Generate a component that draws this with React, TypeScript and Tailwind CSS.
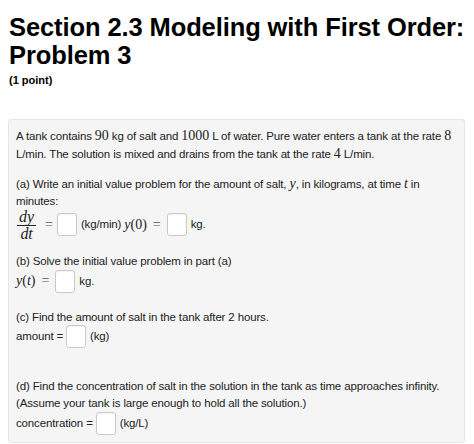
import React from 'react';

const sans = { fontFamily: '"Liberation Sans", Arial, sans-serif' };
const serif = { fontFamily: '"Liberation Serif", "Times New Roman", serif' };

function M({ children, italic }: { children: React.ReactNode; italic?: boolean }) {
  return (
    <span className={`text-[14px] tracking-normal ${italic ? 'italic' : ''}`} style={serif}>
      {children}
    </span>
  );
}

function Box() {
  return (
    <span className="inline-block w-[20px] h-[23px] bg-white border border-[#c8c8c8] rounded-[3px] align-middle shadow-[inset_0_1px_1px_rgba(0,0,0,0.05)]" />
  );
}

export default function App() {
  return (
    <div className="w-[474px] h-[444px] bg-white text-black overflow-hidden" style={sans}>
      <div className="pl-[9px] pt-[13px]">
        <h1 className="text-[25.5px] font-bold leading-[28px] tracking-[-0.1px]">
          Section 2.3 Modeling with First Order: Problem 3
        </h1>
        <div className="text-[11px] font-bold mt-[4px] leading-[14px]">(1 point)</div>
      </div>

      <div className="mx-[8px] mt-[32px] w-[457px] bg-[#f5f5f5] border border-[#e6e6e6] rounded-[3px] px-[7px] pt-[7px] pb-[7px] text-[11.5px] tracking-[-0.15px] leading-[17px] text-[#222]">
        <p>
          A tank contains <M>90</M> kg of salt and <M>1000</M> L of water. Pure water enters a tank at the rate <M>8</M>{' '}
          L/min. The solution is mixed and drains from the tank at the rate <M>4</M> L/min.
        </p>

        <p className="mt-[12px]">
          (a) Write an initial value problem for the amount of salt, <M italic>y</M>, in kilograms, at time <M italic>t</M> in
          minutes:
        </p>
        <div className="flex items-center h-[29px]">
          <span className="inline-flex flex-col items-center mr-[4px] px-[1px]">
            <span className="leading-[14px] text-[16px] italic" style={serif}>dy</span>
            <span className="w-[19px] h-px bg-[#222] my-[1px]" />
            <span className="leading-[13px] text-[16px] italic" style={serif}>dt</span>
          </span>
          <span className="mx-[4px] text-[#555]"><M>=</M></span>
          <Box />
          <span className="ml-[4px]">(kg/min)</span>
          <span className="ml-[3px]"><M italic>y</M><M>(0)</M></span>
          <span className="mx-[6px] text-[#555]"><M>=</M></span>
          <Box />
          <span className="ml-[4px]">kg.</span>
        </div>

        <p className="mt-[14px]">(b) Solve the initial value problem in part (a)</p>
        <div className="flex items-center h-[22px]">
          <span><M italic>y</M><M>(</M><M italic>t</M><M>)</M></span>
          <span className="mx-[6px] text-[#555]"><M>=</M></span>
          <Box />
          <span className="ml-[4px]">kg.</span>
        </div>

        <p className="mt-[17px]">(c) Find the amount of salt in the tank after 2 hours.</p>
        <div className="flex items-center h-[21px]">
          <span className="mr-[3px]">amount =</span>
          <Box />
          <span className="ml-[4px]">(kg)</span>
        </div>

        <p className="mt-[31px]">(d) Find the concentration of salt in the solution in the tank as time approaches infinity. (Assume your tank is large enough to hold all the solution.)</p>
        <div className="flex items-center h-[23px]">
          <span className="mr-[3px]">concentration =</span>
          <Box />
          <span className="ml-[4px]">(kg/L)</span>
        </div>
      </div>
    </div>
  );
}
